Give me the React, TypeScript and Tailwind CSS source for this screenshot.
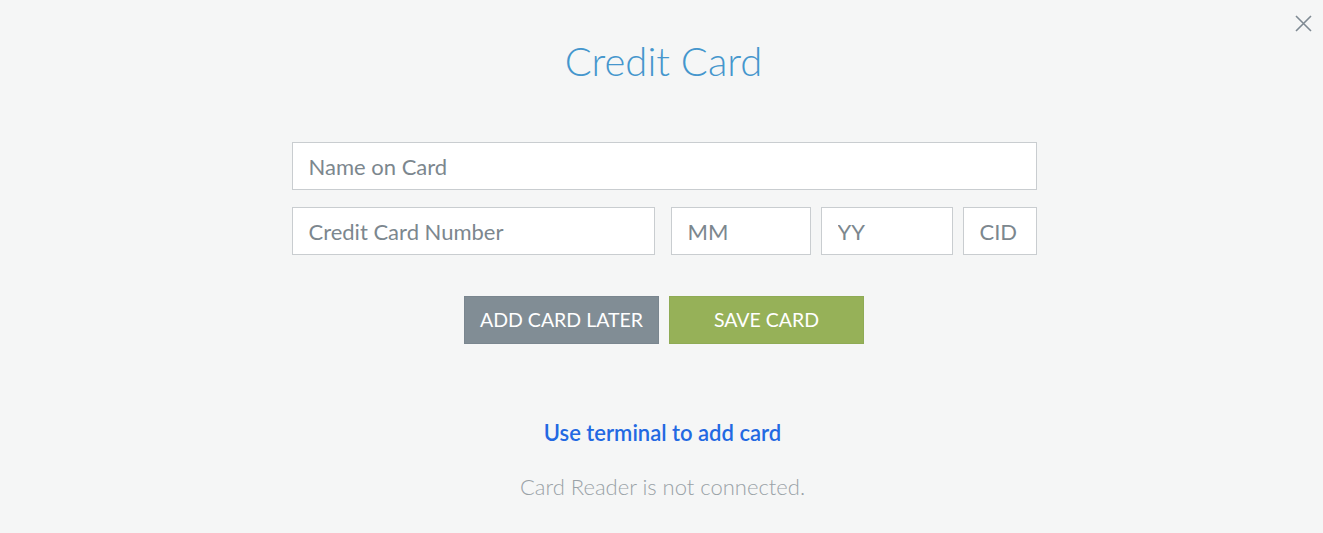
import { useState } from 'react'

export default function App() {
  const [name, setName] = useState('')
  const [number, setNumber] = useState('')
  const [mm, setMm] = useState('')
  const [yy, setYy] = useState('')
  const [cid, setCid] = useState('')

  const inputCls =
    'h-[48px] border border-[#c9cdd0] bg-white px-[16px] text-[22px] text-[#4a555c] placeholder:text-[#7c878e] outline-none'

  return (
    <div className="relative h-[533px] w-full bg-[#f5f6f6] font-['Lato',sans-serif]">
      <button className="absolute right-[11px] top-[15px] text-[#7f8a93]" aria-label="Close">
        <svg width="17" height="17" viewBox="0 0 17 17" fill="none" stroke="currentColor" strokeWidth="1.6">
          <path d="M1 1L16 16M16 1L1 16" />
        </svg>
      </button>

      <div className="flex flex-col items-center pt-[36px]">
        <h1 className="ml-[4px] text-[40px] font-light leading-[50px] text-[#4596cd]">Credit Card</h1>

        <div className="ml-[5px] mt-[56px] flex w-[745px] flex-col gap-[17px]">
          <input
            className={inputCls}
            placeholder="Name on Card"
            value={name}
            onChange={(e) => setName(e.target.value)}
          />
          <div className="flex">
            <input
              className={inputCls + ' w-[363px]'}
              placeholder="Credit Card Number"
              value={number}
              onChange={(e) => setNumber(e.target.value)}
            />
            <input
              className={inputCls + ' ml-[16px] w-[140px]'}
              placeholder="MM"
              value={mm}
              onChange={(e) => setMm(e.target.value)}
            />
            <input
              className={inputCls + ' ml-[10px] w-[132px]'}
              placeholder="YY"
              value={yy}
              onChange={(e) => setYy(e.target.value)}
            />
            <input
              className={inputCls + ' ml-[10px] w-[74px]'}
              placeholder="CID"
              value={cid}
              onChange={(e) => setCid(e.target.value)}
            />
          </div>
        </div>

        <div className="ml-[5px] mt-[41px] flex gap-[10px]">
          <button className="h-[48px] w-[195px] border border-[#7a868f] bg-[#818d95] text-[19.5px] text-white">
            ADD CARD LATER
          </button>
          <button className="h-[48px] w-[195px] border border-[#8fab55] bg-[#96b158] text-[19.5px] text-white">
            SAVE CARD
          </button>
        </div>

        <a href="#" className="ml-[2px] mt-[74px] text-[22px] font-semibold leading-[30px] text-[#2369e2]">
          Use terminal to add card
        </a>
        <p className="ml-[2px] mt-[24px] text-[22px] font-light leading-[30px] text-[#9aa2a7]">
          Card Reader is not connected.
        </p>
      </div>
    </div>
  )
}
